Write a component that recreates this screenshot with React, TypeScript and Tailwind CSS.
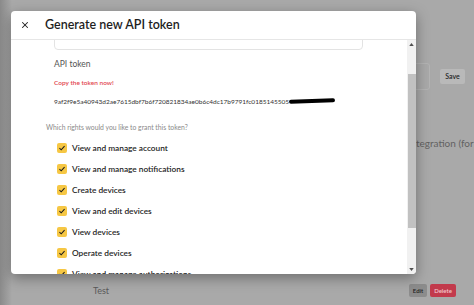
import { X } from 'lucide-react';

const rights = [
  'View and manage account',
  'View and manage notifications',
  'Create devices',
  'View and edit devices',
  'View devices',
  'Operate devices',
  'View and manage authorizations',
];

const Check = () => (
  <span className="flex h-[10px] w-[10px] shrink-0 items-center justify-center rounded-[2px] bg-[#f6c744]">
    <svg viewBox="0 0 10 10" className="h-[8px] w-[8px]">
      <path d="M1.8 5.2 L4 7.2 L8.2 2.6" fill="none" stroke="#1a1a1a" strokeWidth="1.3" />
    </svg>
  </span>
);

function Background() {
  return (
    <div className="flex h-full flex-col text-[#4a4a4a]">
      <div className="mt-[63px] flex items-center justify-end pr-[9px]">
        <div className="h-[27px] w-[40px] rounded-[3px] border border-[#b4b4b4]" />
        <div className="ml-[10px] flex h-[15px] w-[25px] items-center justify-center rounded-[2px] bg-[#b9b9b9] text-[7px] font-semibold text-[#1f1f1f]">
          Save
        </div>
      </div>
      <div className="mt-[46px] flex overflow-hidden whitespace-nowrap text-[10px] text-[#626262]">
        <span className="pl-[408px]">integration (for example)</span>
      </div>
      <div className="mt-auto mb-[8px] flex items-center">
        <span className="ml-[93px] text-[9px] text-[#5a5a5a]">Test</span>
        <div className="ml-auto mr-[18px] flex gap-[3px]">
          <div className="flex h-[13px] w-[18px] items-center justify-center rounded-[2px] bg-[#8c8c8c] text-[6px] font-semibold text-[#1f1f1f]">
            Edit
          </div>
          <div className="flex h-[13px] w-[26px] items-center justify-center rounded-[2px] bg-[#c23a4c] text-[6px] font-semibold text-[#f2c9cf]">
            Delete
          </div>
        </div>
      </div>
    </div>
  );
}

function TokenModal() {
  return (
    <div className="absolute left-[11px] top-[11px] flex h-[263px] w-[405px] flex-col overflow-hidden rounded-[4px] bg-white shadow-[0_4px_14px_rgba(0,0,0,0.35)]">
      <div className="flex h-[29px] shrink-0 items-center border-b border-[#e6e6e6] pl-[9px]">
        <X size={10} strokeWidth={2.5} className="text-[#222]" />
        <span className="ml-[15px] text-[12.5px] font-semibold text-[#1e1e1e]">
          Generate new API token
        </span>
      </div>
      <div className="flex min-h-0 flex-1">
        <div className="min-w-0 flex-1 overflow-hidden">
          <div className="-mt-[20px] pl-[43px]">
            <div className="flex h-[30px] w-[309px] items-end rounded-[4px] border border-[#e3e3e3] px-[8px] pb-[6px] text-[8px] text-[#555]">
              Test
            </div>
            <div className="mt-[8px] text-[8.5px] text-[#555]">API token</div>
            <div className="mt-[7px] text-[6.5px] font-semibold text-[#e2454d]">Copy the token now!</div>
            <div className="mt-[9px] flex items-center whitespace-nowrap text-[6.5px] text-[#333]">
              9af2f9e5a40943d2ae7615dbf7b6f720821834ae0b6c4dc17b9791fc0185145505
              <span className="h-[4px] w-[46px] -rotate-2 rounded-full bg-black" />
            </div>
          </div>
          <div className="mt-[16px] pl-[35px] text-[6.8px] text-[#8a8a8a]">
            Which rights would you like to grant this token?
          </div>
          <div className="mt-[9px] flex flex-col gap-[8px] pl-[46px]">
            {rights.map(r => (
              <div key={r} className="flex h-[13px] items-center gap-[5px]">
                <Check />
                <span className="text-[8.3px] font-semibold text-[#1e1e1e]">{r}</span>
              </div>
            ))}
          </div>
        </div>
        <div className="flex w-[9px] shrink-0 flex-col items-center bg-[#f1f1f1]">
          <svg viewBox="0 0 6 4" className="mt-[3px] h-[3px] w-[5px]">
            <path d="M0 4 L3 0 L6 4 Z" fill="#505050" />
          </svg>
          <div className="mt-[28px] h-[154px] w-[8px] bg-[#c1c1c1]" />
          <svg viewBox="0 0 6 4" className="mb-[3px] mt-auto h-[3px] w-[5px]">
            <path d="M0 0 L3 4 L6 0 Z" fill="#505050" />
          </svg>
        </div>
      </div>
    </div>
  );
}

export default function App() {
  return (
    <div
      className="relative h-[305px] w-[474px] overflow-hidden bg-[#a9a9a9]"
      style={{ fontFamily: 'Lato, "Noto Sans", sans-serif' }}
    >
      <Background />
      <div className="absolute inset-y-0 left-0 w-[12px] bg-gradient-to-r from-[#8a8a8a] to-transparent" />
      <TokenModal />
    </div>
  );
}
